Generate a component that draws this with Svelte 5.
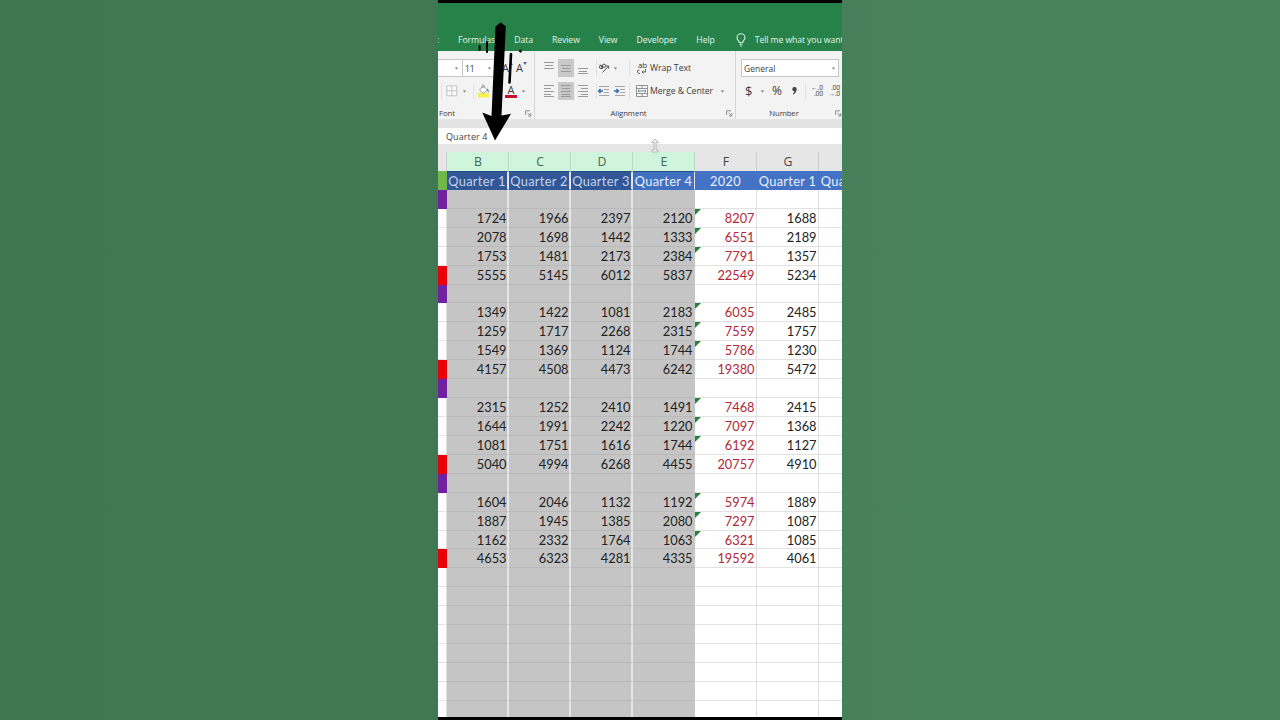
<script>
  const tabs = ['Formulas', 'Data', 'Review', 'View', 'Developer', 'Help'];

  const columns = ['', 'B', 'C', 'D', 'E', 'F', 'G', ''];
  const headings = ['', 'Quarter 1', 'Quarter 2', 'Quarter 3', 'Quarter 4', '2020', 'Quarter 1', 'Quarter 2'];

  const blocks = [
    [
      [1724, 1966, 2397, 2120, 8207, 1688],
      [2078, 1698, 1442, 1333, 6551, 2189],
      [1753, 1481, 2173, 2384, 7791, 1357],
      [5555, 5145, 6012, 5837, 22549, 5234]
    ],
    [
      [1349, 1422, 1081, 2183, 6035, 2485],
      [1259, 1717, 2268, 2315, 7559, 1757],
      [1549, 1369, 1124, 1744, 5786, 1230],
      [4157, 4508, 4473, 6242, 19380, 5472]
    ],
    [
      [2315, 1252, 2410, 1491, 7468, 2415],
      [1644, 1991, 2242, 1220, 7097, 1368],
      [1081, 1751, 1616, 1744, 6192, 1127],
      [5040, 4994, 6268, 4455, 20757, 4910]
    ],
    [
      [1604, 2046, 1132, 1192, 5974, 1889],
      [1887, 1945, 1385, 2080, 7297, 1087],
      [1162, 2332, 1764, 1063, 6321, 1085],
      [4653, 6323, 4281, 4335, 19592, 4061]
    ]
  ];

  const blank = kind => ({ kind, cells: ['', '', '', '', '', '', '', ''] });

  const rows = [{ kind: 'heading', cells: headings }];
  blocks.forEach(block => {
    rows.push(blank('title'));
    block.forEach((values, i) => {
      rows.push({ kind: i === 3 ? 'total' : 'item', cells: ['', ...values, ''] });
    });
  });
  while (rows.length < 29) {
    rows.push(blank('empty'));
  }

  const isSelected = i => i > 0 && i < 5;
</script>

{#snippet caret()}
  <svg class="caret" width="5" height="3" viewBox="0 0 5 3"><path d="M.8 .5h3.4L2.5 2.4z" /></svg>
{/snippet}

{#snippet lines(list)}
  <svg width="12" height="14" viewBox="0 0 12 14">
    {#each list as [x, y, w]}
      <path d="M{x} {y}h{w}" stroke="#9b9b9b" />
    {/each}
  </svg>
{/snippet}

{#snippet launcher()}
  <svg class="launcher" width="7" height="7" viewBox="0 0 7 7" fill="none" stroke="#777" stroke-width=".8">
    <path d="M.6 5V.8H5M2.5 2.7l3 3M5.8 3v3H3" />
  </svg>
{/snippet}

<div class="stage">
  <main>
    <header>
      <span class="cut">t</span>
      {#each tabs as tab}
        <span>{tab}</span>
      {/each}
      <svg class="bulb" width="10" height="14" viewBox="0 0 10 14" fill="none" stroke="#d8eedf" stroke-width="1.1">
        <path d="M3.3 9.5C3.3 7.7 1 7 1 4.7a4 4 0 0 1 8 0C9 7 6.7 7.7 6.7 9.5zM3.5 11.3h3M4 13h2" />
      </svg>
      <span class="tell">Tell me what you want</span>
    </header>

    <section class="ribbon">
      <div class="group font">
        <div class="tools">
          <div class="box family">{@render caret()}</div>
          <div class="box size"><span>11</span>{@render caret()}</div>
          <div class="letter grow">A<svg width="4" height="3" viewBox="0 0 4 3"><path d="M0 3 2 0l2 3z" /></svg></div>
          <div class="letter shrink">A<svg width="4" height="3" viewBox="0 0 4 3"><path d="M0 0h4L2 3z" /></svg></div>
        </div>
        <div class="tools second">
          <i class="bar"></i>
          <svg class="grid-icon" width="12" height="12" viewBox="0 0 12 12" fill="none" stroke="#c2c2c2" stroke-width="1">
            <path d="M.8 .8h10v10H.8zM5.8 1v10M1 5.8h10" fill="#fbfbfb" />
          </svg>
          {@render caret()}
          <i class="bar"></i>
          <svg class="bucket" width="14" height="14" viewBox="0 0 14 14">
            <path d="M1 9h11v4.500H1z" fill="#f6f252" />
            <path d="M2.5 6 6.5 2l3.8 4-4 3.6zM5 4V1.5q1-1.500 2 0V4" fill="#fff" stroke="#888" stroke-width=".8" />
            <path d="M10 4.5q2.500 1 1.500 4.500L10 6z" fill="#4b86b5" />
          </svg>
          <div class="color">A</div>
          {@render caret()}
        </div>
        <div class="label"><span>Font</span>{@render launcher()}</div>
      </div>

      <div class="group alignment">
        <div class="tools">
          <div class="cell">{@render lines([[1, 1.5, 10], [2, 4.5, 8], [1, 7.5, 10]])}</div>
          <div class="cell on">{@render lines([[1, 4.5, 10], [2, 7.5, 8], [1, 10.5, 10]])}</div>
          <div class="cell">{@render lines([[1, 7.5, 10], [2, 10.5, 8], [1, 12.5, 10]])}</div>
          <i class="bar"></i>
          <div class="orient">
            <svg width="12" height="12" viewBox="0 0 12 12" fill="none" stroke="#555" stroke-width="1">
              <circle cx="3" cy="5" r="1.6" /><circle cx="6" cy="3.7" r="1.6" />
              <path d="M2 2.5 5 7M4.5 10.5 10.5 4M8 4h2.700v2.700" />
            </svg>
            {@render caret()}
          </div>
          <i class="bar"></i>
          <div class="wide wrap-icon">
            <span>ab</span>
            <svg width="11" height="6" viewBox="0 0 11 6" fill="none" stroke="#555" stroke-width=".9">
              <path d="M3.5 1q-2.500 0-2 2t2.500 1.500M9.500 0v3H6M7.500 1.500 6 3l1.500 1.500" />
            </svg>
          </div>
          <span class="caption wrap">Wrap Text</span>
        </div>
        <div class="tools second">
          <div class="cell">{@render lines([[1, 1.5, 10], [1, 4.5, 7], [1, 7.5, 10], [1, 10.5, 7], [1, 12.5, 10]])}</div>
          <div class="cell on">{@render lines([[1, 1.5, 10], [2, 4.5, 8], [1, 7.5, 10], [2, 10.5, 8], [1, 12.5, 10]])}</div>
          <div class="cell">{@render lines([[1, 1.5, 10], [4, 4.5, 7], [1, 7.5, 10], [4, 10.5, 7], [1, 12.5, 10]])}</div>
          <i class="bar"></i>
          <div class="indents">
            {#each [0, 1] as dir}
              <svg width="12" height="12" viewBox="0 0 12 12" fill="none" stroke="#a5a5a5">
                <path d="M1 1.5h10M6 4.5h5M6 7.5h5M1 10.5h10" />
                <path d={dir ? 'M0 6h4M2.5 4 4.5 6l-2 2' : 'M1 6h4M2.5 4 .8 6l1.7 2'} stroke="#2f6ca8" stroke-width="1.4" />
              </svg>
            {/each}
          </div>
          <i class="bar"></i>
          <svg class="wide" width="12" height="12" viewBox="0 0 12 12" fill="none" stroke="#888" stroke-width=".9">
            <path d="M.5 .5h11v11H.5zM.5 3.5h11M.5 8.5h11M6 .5v3M6 8.5v3" fill="#fafafa" />
            <path d="M2 6h8M3.3 4.9 2 6l1.300 1.100M8.700 4.900 10 6 8.700 7.100" stroke="#55799c" />
          </svg>
          <span class="caption merge">Merge &amp; Center</span>
          {@render caret()}
        </div>
        <div class="label"><span>Alignment</span>{@render launcher()}</div>
      </div>

      <div class="group number">
        <div class="tools">
          <div class="box format"><span>General</span>{@render caret()}</div>
        </div>
        <div class="tools second">
          <span class="symbol dollar">$</span>
          {@render caret()}
          <span class="symbol percent">%</span>
          <svg class="comma" width="5" height="8" viewBox="0 0 5 8">
            <path d="M2.400 0a2.100 2.100 0 0 1 2.200 2.300Q4.600 5.500 1.200 7.500L.8 6.800Q2.300 5.700 2.400 4.300A2.150 2.150 0 0 1 2.400 0z" fill="#444" />
          </svg>
          <i class="bar"></i>
          <div class="decimals">
            <span><b>←</b>.0</span>
            <span>.00</span>
          </div>
          <div class="decimals">
            <span>.00</span>
            <span><b>→</b>.0</span>
          </div>
        </div>
        <div class="label"><span>Number</span>{@render launcher()}</div>
      </div>
    </section>

    <div class="formula">Quarter 4</div>

    <div class="columns">
      {#each columns as column, i}
        <div class:selected={isSelected(i)}>{column}</div>
      {/each}
    </div>

    <div class="sheet">
      {#each rows as row}
        <div class="row {row.kind}">
          {#each row.cells as cell, i}
            <div
              class="cell-value"
              class:selected={isSelected(i)}
              class:active={i === 4}
              class:year={i === 5}
              class:flag={i === 5 && row.kind === 'item'}
            >{cell}</div>
          {/each}
        </div>
      {/each}
    </div>

    <svg class="cursor" width="10" height="16" viewBox="0 0 10 16">
      <path d="M5 1 8.5 4.5H6V12h2v2H2v-2h2V4.5H1.5z" fill="#f4f4f4" stroke="#aaa" stroke-width=".8" />
    </svg>

    <svg class="arrow" width="50" height="125" viewBox="475 18 50 125">
      <path d="M495.5 26.5 500.7 22.3 505.8 26.5 501.5 115.500 511 113.800 495 140.500 482.300 112.500 491.500 116z" />
      <path d="M511 54 509.5 82.500" stroke-width="2.6" />
      <path d="M487 42v10" stroke-width="2" />
      <path d="M479.6 46v4" stroke-width="2" />
      <path d="M520.1 50.8 520.6 51.3" stroke-width="2.5" />
    </svg>
  </main>
</div>

<style>
  :global(body) {
    margin: 0;
    overflow: hidden;
  }

  .stage {
    background: linear-gradient(90deg, #407651 0, #3f7853 12%, #3f7853 50%, #47805b 66%, #48825d 72%);
    display: flex;
    height: 720px;
    justify-content: center;
    width: 1280px;
  }

  main {
    background: #fff;
    border-bottom: 3px solid #000;
    border-top: 3px solid #000;
    box-sizing: border-box;
    color: #3c3c3c;
    font-family: 'Open Sans', 'Noto Sans', sans-serif;
    height: 720px;
    overflow: hidden;
    position: relative;
    width: 404px;
  }

  svg {
    display: block;
    flex: none;
  }

  header {
    align-items: center;
    background: #27824a;
    box-sizing: border-box;
    color: #e3f3e8;
    display: flex;
    font-size: 8.7px;
    gap: 19px;
    height: 48px;
    letter-spacing: -0.08px;
    line-height: 12px;
    padding-top: 25px;
    white-space: nowrap;
  }

  .cut {
    margin-left: -2px;
    width: 3px;
  }

  .bulb {
    margin-left: 2px;
  }

  .tell {
    letter-spacing: -0.11px;
    margin-left: -10px;
  }

  .ribbon {
    background: #f3f3f3;
    display: flex;
    height: 68px;
    width: 404px;
  }

  .group {
    box-sizing: border-box;
    flex: none;
    height: 68px;
    padding-top: 8px;
  }

  .font {
    border-right: 1px solid #d6d6d6;
    width: 97px;
  }

  .alignment {
    border-right: 1px solid #d6d6d6;
    padding-left: 6px;
    width: 201px;
  }

  .number {
    padding-left: 5px;
    width: 106px;
  }

  .tools {
    align-items: center;
    display: flex;
    height: 18px;
  }

  .second {
    margin-top: 5px;
  }

  .caret {
    fill: #777;
  }

  .bar {
    background: #e2e2e2;
    flex: none;
    height: 16px;
    width: 1px;
  }

  .box {
    align-items: center;
    background: #fff;
    border: 1px solid #c6c6c6;
    box-sizing: border-box;
    display: flex;
    font-size: 8.5px;
    height: 18px;
    justify-content: space-between;
    padding: 0 2px;
  }

  .family {
    border-left: 0;
    justify-content: flex-end;
    padding-right: 3px;
    width: 25px;
  }

  .size {
    border-left: 0;
    width: 32px;
  }

  .letter {
    display: flex;
    font-size: 11px;
    line-height: 14px;
    margin-left: 7px;
  }

  .letter svg {
    fill: #456f94;
    margin-top: 1px;
  }

  .shrink {
    margin-left: 3px;
  }

  .font .second .bar:first-child {
    margin: 0 4px 0 3px;
  }

  .font .second .caret {
    margin: 0 6px 0 4px;
  }

  .bucket {
    margin-left: 3px;
  }

  .color {
    border-bottom: 3px solid #c8102e;
    box-sizing: border-box;
    font-size: 11px;
    height: 14px;
    line-height: 11px;
    margin-left: 14px;
    text-align: center;
    width: 12px;
  }

  .label {
    align-items: center;
    display: flex;
    font-size: 7.7px;
    height: 12px;
    letter-spacing: -0.05px;
    line-height: 12px;
    margin-top: 7px;
  }

  .font .label span {
    flex: 1;
    padding-left: 1px;
  }

  .launcher {
    margin-right: 2px;
  }

  .alignment .label span,
  .number .label span {
    flex: 1;
    text-align: center;
  }

  .alignment .label span {
    padding-right: 10px;
  }

  .number .label span {
    padding-right: 8px;
  }

  .number .launcher {
    margin-right: 0;
  }

  .cell {
    align-items: center;
    display: flex;
    flex: none;
    height: 18px;
    justify-content: center;
    margin-right: 1px;
    width: 16px;
  }

  .cell.on {
    background: #c9c9c9;
  }

  .alignment .bar {
    margin-left: 4px;
  }

  .orient,
  .indents {
    align-items: center;
    display: flex;
    gap: 4px;
    margin-left: 1px;
    width: 30px;
  }

  .orient {
    gap: 3px;
  }

  .alignment .orient + .bar,
  .alignment .indents + .bar {
    margin-left: 1px;
  }

  .wide {
    margin-left: 6px;
  }

  .wrap-icon {
    display: flex;
    flex-direction: column;
    width: 12px;
  }

  .wrap-icon span {
    font-size: 8px;
    letter-spacing: -0.2px;
    line-height: 8px;
    padding-left: 2px;
  }

  .caption {
    font-size: 8.7px;
    margin-left: 2px;
    white-space: nowrap;
  }

  .wrap {
    letter-spacing: -0.02px;
  }

  .merge {
    letter-spacing: -0.06px;
  }

  .merge + .caret {
    margin-left: 7px;
  }

  .format {
    width: 98px;
  }

  .symbol {
    flex: none;
    font-size: 13px;
    line-height: 18px;
  }

  .dollar {
    padding-left: 4px;
    width: 15px;
  }

  .percent {
    font-size: 12px;
    padding-left: 7px;
    width: 19px;
  }

  .comma {
    margin: 0 8px 0 1px;
  }

  .decimals {
    display: flex;
    flex: none;
    flex-direction: column;
    font-size: 6.8px;
    letter-spacing: -0.2px;
    line-height: 6.5px;
    margin-left: 4px;
    text-align: right;
    width: 13px;
  }

  .decimals b {
    color: #2f6ca8;
  }

  .formula {
    background: #fff;
    border-bottom: 8px solid #e6e6e6;
    border-top: 9px solid #e3e3e3;
    color: #444;
    font-size: 9px;
    height: 16px;
    letter-spacing: 0.1px;
    line-height: 17px;
    padding-left: 8px;
  }

  .columns,
  .row {
    display: grid;
    grid-template-columns: 9px repeat(7, 62px);
  }

  .columns {
    height: 19px;
  }

  .columns div {
    background: #e6e6e6;
    border-right: 1px solid #cfcfcf;
    color: #444;
    font-size: 12.3px;
    line-height: 20px;
    padding-left: 1px;
    text-align: center;
  }

  .columns div:first-child {
    padding-left: 0;
  }

  .columns .selected {
    background: #cff5dc;
    border-color: #b9dcc5;
    color: #456553;
  }

  .row {
    height: 18.93px;
  }

  .cell-value {
    border-bottom: 1px solid #e2e2e2;
    border-right: 1px solid #dedede;
    box-sizing: border-box;
    color: #222;
    font-family: Lato, sans-serif;
    font-size: 12.8px;
    line-height: 19.4px;
    overflow: hidden;
    padding-right: 1.5px;
    position: relative;
    text-align: right;
    white-space: nowrap;
  }

  .selected.cell-value {
    background: #c5c5c5;
    border-bottom-color: #bababa;
    border-right: 2px solid #e6e6e6;
    padding-right: 0.5px;
  }

  .active.cell-value {
    border-right: 1px solid #c5c5c5;
    padding-right: 1.5px;
  }

  .year.cell-value {
    color: #b32638;
  }

  .heading .cell-value {
    background: #4472c4;
    border-bottom-color: #4472c4;
    border-right-color: #4472c4;
    color: #e9effa;
    letter-spacing: 0.3px;
    line-height: 20px;
    padding: 0;
    text-align: center;
  }

  .heading .cell-value.selected {
    background: #315797;
    border-bottom-color: #315797;
    border-right-color: #dfe6f2;
    border-top: 1px solid #244a80;
    color: #c5d3ea;
    line-height: 19px;
  }

  .heading .cell-value.active {
    background: #4070c0;
    border-bottom-color: #4070c0;
    color: #e9effa;
  }

  .heading .cell-value.year {
    color: #e9effa;
  }

  .heading .cell-value:first-child {
    background: #70b84c;
    border-color: #70b84c;
  }

  .title .cell-value:first-child {
    background: #7021a0;
    border-color: #7021a0;
  }

  .total .cell-value:first-child {
    background: #e8000b;
    border-color: #e8000b;
  }

  .flag::before {
    border-right: 6px solid transparent;
    border-top: 6px solid #26813a;
    content: '';
    left: 0;
    position: absolute;
    top: 0;
  }

  .cursor {
    left: 212px;
    position: absolute;
    top: 135px;
  }

  .arrow {
    fill: #000;
    left: 37px;
    position: absolute;
    stroke: #000;
    stroke-linecap: round;
    stroke-width: 0;
    top: 15px;
  }
</style>
